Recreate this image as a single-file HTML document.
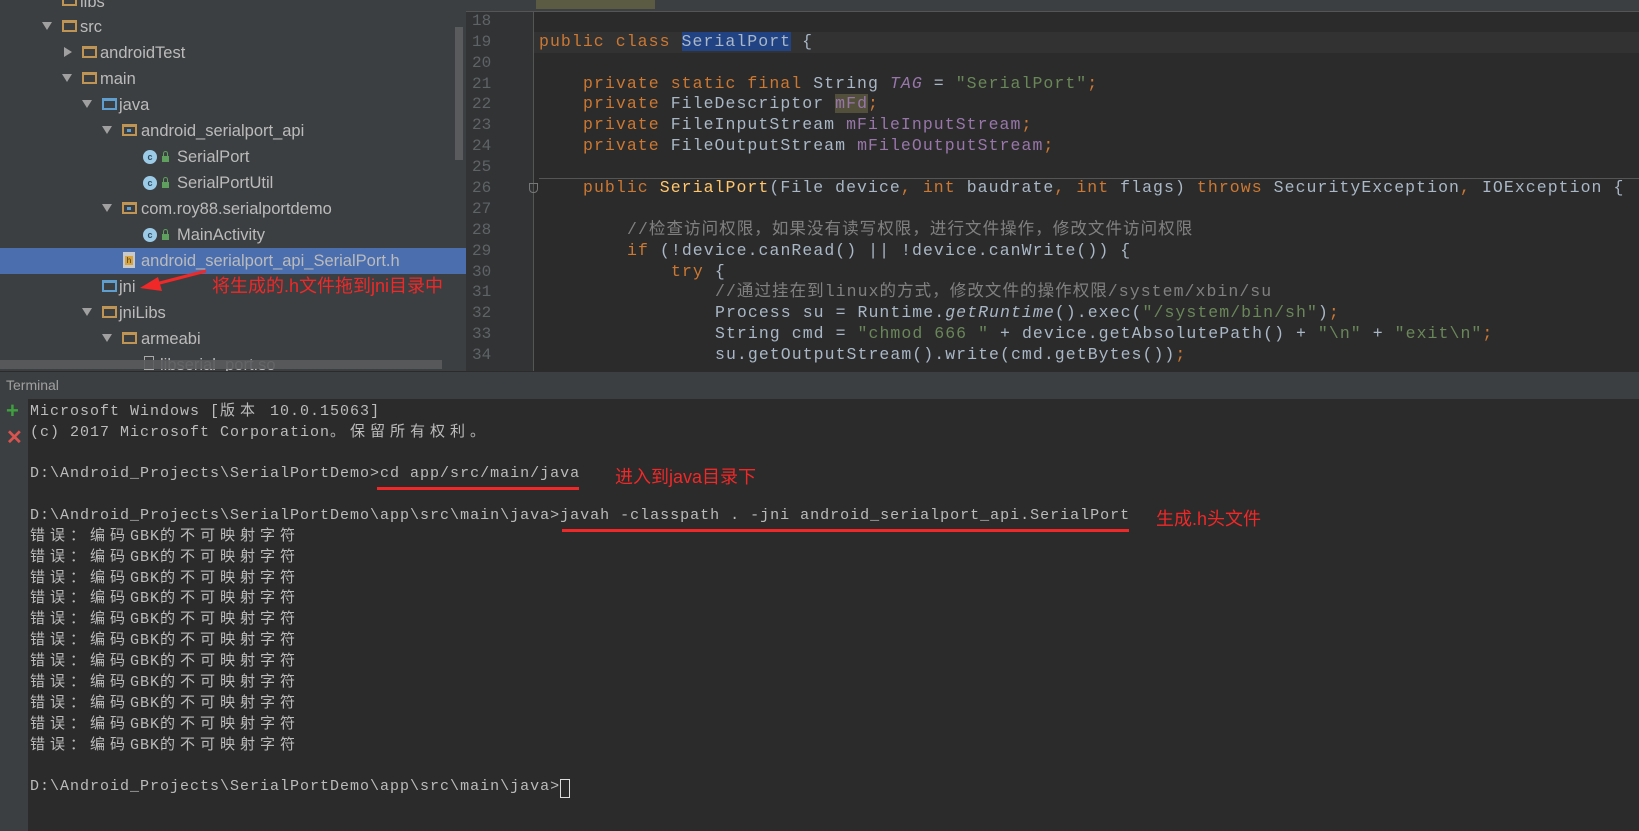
<!DOCTYPE html>
<html><head><meta charset="utf-8"><style>
*{margin:0;padding:0;box-sizing:border-box}
body{width:1639px;height:831px;overflow:hidden;background:#2b2b2b;position:relative;font-family:"Liberation Sans","Noto Sans CJK SC",sans-serif}
.a{position:absolute;white-space:pre}
#tree{position:absolute;left:0;top:0;width:466px;height:371px;background:#3c3f41;overflow:hidden}
.t{position:absolute;color:#bbbbbb;font-size:16.5px;line-height:20px;white-space:pre}
.tri{position:absolute;width:0;height:0;border-left:5px solid transparent;border-right:5px solid transparent;border-top:8px solid #a0a0a0}
.tri.r{border-top:5px solid transparent;border-bottom:5px solid transparent;border-left:8px solid #a0a0a0;border-right:0}
.fo{position:absolute;width:15px;height:12px;border:2px solid #c09553;border-top-width:3px}
.fo.b{border-color:#5f9fcf}
.pk{position:absolute;width:15px;height:12px;border:2px solid #c09553;border-top-width:3px}
.pk:after{content:"";position:absolute;left:3px;top:2px;width:4px;height:3px;background:#5f9fcf}
.ci{position:absolute;width:14px;height:14px;border-radius:50%;background:#9ccbe8;color:#2d4c63;font-size:9px;line-height:14px;text-align:center;font-weight:bold}
.lk{position:absolute;width:7px;height:6px;background:#5fa05f}
.lk:before{content:"";position:absolute;left:1px;top:-5px;width:3px;height:4px;border:1px solid #5fa05f;border-bottom:0;border-radius:3px 3px 0 0}
.code{position:absolute;font-family:"Liberation Mono","Noto Sans CJK SC",monospace;font-size:16.5px;letter-spacing:1.06px;color:#a9b7c6;white-space:pre;line-height:20px}
.k{color:#cc7832}.s{color:#6a8759}.f{color:#9876aa}.c{color:#808080}.i{font-style:italic}
.ln{position:absolute;left:472px;font-family:"Liberation Mono",monospace;font-size:16px;color:#606366;line-height:20px}
.term{position:absolute;left:30px;font-family:"Liberation Mono","Noto Sans CJK SC",monospace;font-size:15px;letter-spacing:1px;color:#bbbbbb;white-space:pre;line-height:20px}
.z{letter-spacing:5px}
.red{color:#f02828;font-family:"Liberation Sans","Noto Sans CJK SC",sans-serif;font-size:17px;position:absolute;white-space:pre;line-height:20px}
</style></head><body>
<div id="tree">
 <div class="fo" style="left:62px;top:-6px"></div><div class="t" style="left:80px;top:-8px">libs</div>
 <div class="tri" style="left:42px;top:22px"></div><div class="fo" style="left:62px;top:20px"></div><div class="t" style="left:80px;top:17px">src</div>
 <div class="tri r" style="left:64px;top:47px"></div><div class="fo" style="left:82px;top:46px"></div><div class="t" style="left:100px;top:43px">androidTest</div>
 <div class="tri" style="left:62px;top:74px"></div><div class="fo" style="left:82px;top:72px"></div><div class="t" style="left:100px;top:69px">main</div>
 <div class="tri" style="left:82px;top:100px"></div><div class="fo b" style="left:102px;top:98px"></div><div class="t" style="left:119px;top:95px">java</div>
 <div class="tri" style="left:102px;top:126px"></div><div class="pk" style="left:122px;top:124px"></div><div class="t" style="left:141px;top:121px">android_serialport_api</div>
 <div class="ci" style="left:143px;top:150px">c</div><div class="lk" style="left:162px;top:156px"></div><div class="t" style="left:177px;top:147px">SerialPort</div>
 <div class="ci" style="left:143px;top:176px">c</div><div class="lk" style="left:162px;top:182px"></div><div class="t" style="left:177px;top:173px">SerialPortUtil</div>
 <div class="tri" style="left:102px;top:204px"></div><div class="pk" style="left:122px;top:202px"></div><div class="t" style="left:141px;top:199px">com.roy88.serialportdemo</div>
 <div class="ci" style="left:143px;top:228px">c</div><div class="lk" style="left:162px;top:234px"></div><div class="t" style="left:177px;top:225px">MainActivity</div>
 <div style="position:absolute;left:0;top:248px;width:466px;height:26px;background:#4b6eaf"></div>
 <div style="position:absolute;left:123px;top:252px;width:12px;height:16px;background:#c9c9c9"><div style="position:absolute;left:2px;top:4px;width:8px;height:9px;background:#d9a33a;color:#333;font-size:8px;line-height:9px;text-align:center">h</div></div>
 <div class="t" style="left:141px;top:251px">android_serialport_api_SerialPort.h</div>
 <div class="fo b" style="left:102px;top:280px"></div><div class="t" style="left:119px;top:277px">jni</div>
 <div class="tri" style="left:82px;top:308px"></div><div class="fo" style="left:102px;top:306px"></div><div class="t" style="left:119px;top:303px">jniLibs</div>
 <div class="tri" style="left:102px;top:334px"></div><div class="fo" style="left:122px;top:332px"></div><div class="t" style="left:141px;top:329px">armeabi</div>
 <div style="position:absolute;left:144px;top:356px;width:10px;height:14px;border:1px solid #aaa"></div><div class="t" style="left:160px;top:355px">libserial_port.so</div>
 <div style="position:absolute;left:0;top:360px;width:442px;height:9px;background:#595b5d;opacity:.9"></div>
 <div style="position:absolute;left:455px;top:27px;width:8px;height:133px;background:#595b5d"></div>
 <div class="red" style="left:212px;top:276px;font-size:18px">将生成的.h文件拖到jni目录中</div>
 <svg style="position:absolute;left:0;top:0" width="466" height="371"><path d="M206 271 L152 285" stroke="#f02828" stroke-width="3"/><path d="M140 288 L158 277 L162 291 Z" fill="#f02828"/></svg>
</div>
<div style="position:absolute;left:466px;top:0;width:1173px;height:11px;background:#3c3f41"></div>
<div style="position:absolute;left:536px;top:0;width:119px;height:9px;background:#5b5b44"></div>
<div style="position:absolute;left:466px;top:11px;width:1173px;height:1px;background:#555"></div>
<div style="position:absolute;left:466px;top:12px;width:67px;height:359px;background:#313335"></div>
<div style="position:absolute;left:533px;top:12px;width:1px;height:359px;background:#555"></div>
<div style="position:absolute;left:534px;top:32px;width:1105px;height:21px;background:#323232"></div>
<div style="position:absolute;left:539px;top:178px;width:1100px;height:1px;background:#555"></div>
<div style="position:absolute;left:529px;top:183px;width:9px;height:10px;border:1px solid #777;border-radius:0 0 4px 4px"></div>
<div class="ln" style="top:11px">18</div><div class="ln" style="top:32px">19</div><div class="ln" style="top:53px">20</div><div class="ln" style="top:74px">21</div><div class="ln" style="top:94px">22</div><div class="ln" style="top:115px">23</div><div class="ln" style="top:136px">24</div><div class="ln" style="top:157px">25</div><div class="ln" style="top:178px">26</div><div class="ln" style="top:199px">27</div><div class="ln" style="top:220px">28</div><div class="ln" style="top:241px">29</div><div class="ln" style="top:262px">30</div><div class="ln" style="top:282px">31</div><div class="ln" style="top:303px">32</div><div class="ln" style="top:324px">33</div><div class="ln" style="top:345px">34</div>
<div class="code" style="left:539px;top:32px"><span class="k">public class </span><span style="background:#214283">SerialPort</span> {</div>
<div class="code" style="left:583px;top:74px"><span class="k">private static final </span>String <span class="f i">TAG</span> = <span class="s">"SerialPort"</span><span class="k">;</span></div>
<div class="code" style="left:583px;top:94px"><span class="k">private </span>FileDescriptor <span class="f" style="background:#52503a">mFd</span><span class="k">;</span></div>
<div class="code" style="left:583px;top:115px"><span class="k">private </span>FileInputStream <span class="f">mFileInputStream</span><span class="k">;</span></div>
<div class="code" style="left:583px;top:136px"><span class="k">private </span>FileOutputStream <span class="f">mFileOutputStream</span><span class="k">;</span></div>
<div class="code" style="left:583px;top:178px"><span class="k">public </span><span style="color:#ffc66d">SerialPort</span>(File device<span class="k">, int </span>baudrate<span class="k">, int </span>flags) <span class="k">throws </span>SecurityException<span class="k">, </span>IOException {</div>
<div class="code c" style="left:627px;top:220px">//检查访问权限，如果没有读写权限，进行文件操作，修改文件访问权限</div>
<div class="code" style="left:627px;top:241px"><span class="k">if </span>(!device.canRead() || !device.canWrite()) {</div>
<div class="code" style="left:671px;top:262px"><span class="k">try </span>{</div>
<div class="code c" style="left:715px;top:282px">//通过挂在到linux的方式，修改文件的操作权限/system/xbin/su</div>
<div class="code" style="left:715px;top:303px">Process su = Runtime.<span class="i">getRuntime</span>().exec(<span class="s">"/system/bin/sh"</span>)<span class="k">;</span></div>
<div class="code" style="left:715px;top:324px">String cmd = <span class="s">"chmod 666 "</span> + device.getAbsolutePath() + <span class="s">"\n"</span> + <span class="s">"exit\n"</span><span class="k">;</span></div>
<div class="code" style="left:715px;top:345px">su.getOutputStream().write(cmd.getBytes())<span class="k">;</span></div>
<div style="position:absolute;left:0;top:371px;width:1639px;height:28px;background:#3c3f41;border-top:1px solid #2b2b2b"></div>
<div class="a" style="left:6px;top:377px;color:#a0a0a0;font-size:14px">Terminal</div>
<div style="position:absolute;left:0;top:399px;width:28px;height:432px;background:#3c3f41"></div>
<div class="a" style="left:6px;top:398px;color:#3fa03f;font-size:22px;font-weight:bold">+</div>
<div class="a" style="left:6px;top:425px;color:#d9534f;font-size:20px;font-weight:bold">✕</div>
<div class="term" style="top:402px">Microsoft Windows [<span class="z">版本</span> 10.0.15063]</div>
<div class="term" style="top:423px">(c) 2017 Microsoft Corporation<span class="z">。保留所有权利。</span></div>
<div class="term" style="top:464px">D:\Android_Projects\SerialPortDemo&gt;cd app/src/main/java</div>
<div class="term" style="top:506px">D:\Android_Projects\SerialPortDemo\app\src\main\java&gt;javah -classpath . -jni android_serialport_api.SerialPort</div>
<div class="term" style="top:527px"><span class="z">错误：编码</span>GBK<span class="z">的不可映射字符</span></div>
<div class="term" style="top:548px"><span class="z">错误：编码</span>GBK<span class="z">的不可映射字符</span></div>
<div class="term" style="top:569px"><span class="z">错误：编码</span>GBK<span class="z">的不可映射字符</span></div>
<div class="term" style="top:589px"><span class="z">错误：编码</span>GBK<span class="z">的不可映射字符</span></div>
<div class="term" style="top:610px"><span class="z">错误：编码</span>GBK<span class="z">的不可映射字符</span></div>
<div class="term" style="top:631px"><span class="z">错误：编码</span>GBK<span class="z">的不可映射字符</span></div>
<div class="term" style="top:652px"><span class="z">错误：编码</span>GBK<span class="z">的不可映射字符</span></div>
<div class="term" style="top:673px"><span class="z">错误：编码</span>GBK<span class="z">的不可映射字符</span></div>
<div class="term" style="top:694px"><span class="z">错误：编码</span>GBK<span class="z">的不可映射字符</span></div>
<div class="term" style="top:715px"><span class="z">错误：编码</span>GBK<span class="z">的不可映射字符</span></div>
<div class="term" style="top:736px"><span class="z">错误：编码</span>GBK<span class="z">的不可映射字符</span></div>
<div class="term" style="top:777px">D:\Android_Projects\SerialPortDemo\app\src\main\java&gt;</div>
<div style="position:absolute;left:560px;top:779px;width:10px;height:19px;border:1px solid #ddd"></div>
<div style="position:absolute;left:377px;top:487px;width:202px;height:3px;background:#f02828"></div>
<div style="position:absolute;left:562px;top:529px;width:567px;height:3px;background:#f02828"></div>
<div class="red" style="left:615px;top:467px;font-size:18px">进入到java目录下</div>
<div class="red" style="left:1156px;top:509px;font-size:18px">生成.h头文件</div>
</body></html>
